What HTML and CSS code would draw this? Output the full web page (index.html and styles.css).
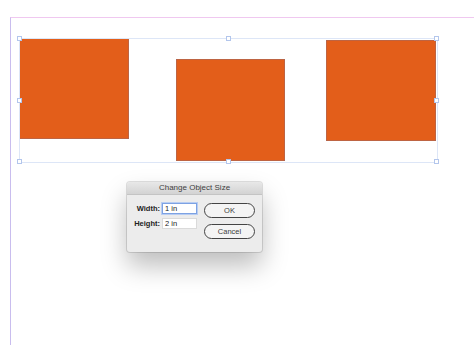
FILE: index.html
```html
<!DOCTYPE html>
<html lang="en">
<head>
    <meta charset="UTF-8">
    <title>Change Object Size</title>
    <link rel="stylesheet" href="styles.css">
</head>
<body>
    <div class="pasteboard">
        <div class="page"></div>

        <div class="shape" style="left: 19px; top: 38px; width: 110px; height: 101px;"></div>
        <div class="shape" style="left: 176px; top: 59px; width: 109px; height: 102px;"></div>
        <div class="shape" style="left: 326px; top: 40px; width: 110px; height: 101px;"></div>

        <div class="selection">
            <span class="handle h-tl"></span>
            <span class="handle h-tm"></span>
            <span class="handle h-tr"></span>
            <span class="handle h-ml"></span>
            <span class="handle h-mr"></span>
            <span class="handle h-bl"></span>
            <span class="handle h-bm"></span>
            <span class="handle h-br"></span>
        </div>

        <div class="dialog">
            <div class="dialog-title">Change Object Size</div>
            <div class="dialog-body">
                <div class="fields">
                    <label class="field">
                        <span class="field-label">Width:</span>
                        <span class="field-input focused">1 in</span>
                    </label>
                    <label class="field">
                        <span class="field-label">Height:</span>
                        <span class="field-input">2 in</span>
                    </label>
                </div>
                <div class="buttons">
                    <button class="btn">OK</button>
                    <button class="btn">Cancel</button>
                </div>
            </div>
        </div>
    </div>
</body>
</html>
```

FILE: styles.css
```css
body {
    margin: 0;
    background-color: #ffffff;
    font-family: 'Liberation Sans', Arial, sans-serif;
}

.pasteboard {
    position: relative;
    width: 474px;
    height: 345px;
    overflow: hidden;
    background-color: #ffffff;
}

.page {
    position: absolute;
    left: 10px;
    top: 17px;
    right: -10px;
    bottom: -10px;
    border-top: 1px solid #f0c8f0;
    border-left: 1px solid #c9bdee;
}

.shape {
    position: absolute;
    background-color: #e35e1a;
    box-shadow: inset 0 0 0 0.5px #9a6a6a;
}

.selection {
    position: absolute;
    left: 19px;
    top: 38px;
    width: 417px;
    height: 123px;
    border: 1px solid #dde6f7;
}

.handle {
    position: absolute;
    width: 3px;
    height: 3px;
    background-color: #ffffff;
    border: 1px solid #b3c6ec;
    margin: -3px 0 0 -3px;
}

.h-tl { left: 0; top: 0; }
.h-tm { left: 50%; top: 0; }
.h-tr { left: 100%; top: 0; }
.h-ml { left: 0; top: 50%; }
.h-mr { left: 100%; top: 50%; }
.h-bl { left: 0; top: 100%; }
.h-bm { left: 50%; top: 100%; }
.h-br { left: 100%; top: 100%; }

.dialog {
    position: absolute;
    left: 127px;
    top: 182px;
    width: 135px;
    height: 70px;
    background-color: #ececec;
    border-radius: 3px;
    box-shadow: 0 0 0 1px rgba(0, 0, 0, 0.12), 0 14px 26px rgba(0, 0, 0, 0.26);
    overflow: hidden;
}

.dialog-title {
    height: 12px;
    line-height: 12px;
    text-align: center;
    font-size: 8px;
    color: #404040;
    background: linear-gradient(#e8e8e8, #d3d3d3);
    border-bottom: 1px solid #c4c4c4;
}

.dialog-body {
    display: flex;
    padding: 8px 0 0 6px;
}

.fields {
    display: flex;
    flex-direction: column;
    gap: 4px;
}

.field {
    display: flex;
    align-items: center;
    gap: 2px;
}

.field-label {
    width: 27px;
    text-align: right;
    font-size: 7.5px;
    font-weight: bold;
    color: #222;
}

.field-input {
    box-sizing: border-box;
    width: 35px;
    height: 11px;
    line-height: 10px;
    padding-left: 2px;
    font-size: 7.5px;
    color: #222;
    background-color: #ffffff;
    border: 1px solid #dadada;
}

.field-input.focused {
    border-color: #7da2e3;
    box-shadow: 0 0 0 1px #b8cdf2;
}

.buttons {
    display: flex;
    flex-direction: column;
    gap: 6px;
    margin-left: 7px;
}

.btn {
    box-sizing: border-box;
    width: 51px;
    height: 15px;
    padding: 0;
    font-family: 'Liberation Sans', Arial, sans-serif;
    font-size: 7.5px;
    color: #404040;
    background-color: #f4f4f4;
    border: 1px solid #444;
    border-radius: 8px;
}
```
